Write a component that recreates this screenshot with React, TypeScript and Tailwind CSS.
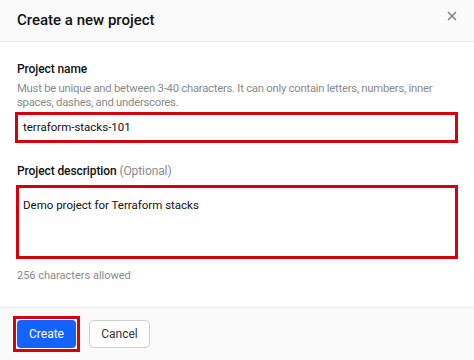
export default function App() {
  return (
    <div
      className="w-[474px] h-[360px] bg-white flex flex-col text-[#1f1f1f] overflow-hidden"
      style={{ fontFamily: "Roboto, 'Noto Sans', sans-serif" }}
    >
      {/* Header */}
      <div className="h-[42px] shrink-0 bg-[#fafafa] border-b border-[#ebebeb] flex items-center justify-between pl-[17px] pr-[17px]">
        <h2 className="text-[15px] font-medium text-[#111]">Create a new project</h2>
        <button className="text-[#777] -mt-[9px]" aria-label="Close">
          <svg width="10" height="10" viewBox="0 0 10 10" fill="none" stroke="currentColor" strokeWidth="1.3">
            <path d="M1 1l8 8M9 1l-8 8" />
          </svg>
        </button>
      </div>

      {/* Body */}
      <div className="flex-1 px-[17px] pt-[19px]">
        <label className="block text-[12px] font-medium leading-[16px] tracking-[-0.1px] text-[#111]">
          Project name
        </label>
        <p className="mt-[5px] text-[11.3px] leading-[14px] tracking-[-0.25px] text-[#8a8a8a]">
          Must be unique and between 3-40 characters. It can only contain letters, numbers, inner spaces, dashes, and underscores.
        </p>
        <div className="mt-[2px] -ml-[2px] -mr-[1px] h-[31px] border-[3px] border-[#d6000f] flex items-center px-[5px]">
          <span className="text-[11.5px] text-[#111]">terraform-stacks-101</span>
        </div>

        <div className="mt-[20px] text-[12px] leading-[16px] tracking-[-0.1px]">
          <span className="font-medium text-[#111]">Project description</span>{" "}
          <span className="text-[#8a8a8a]">(Optional)</span>
        </div>
        <div className="mt-[6px] -ml-[1px] -mr-[1px] h-[74px] border-[3px] border-[#d6000f] px-[4px] pt-[4px]">
          <span className="text-[11.5px] text-[#111]">Demo project for Terraform stacks</span>
        </div>
        <p className="mt-[9px] text-[11px] leading-[16px] text-[#8a8a8a]">256 characters allowed</p>
      </div>

      {/* Footer */}
      <div className="h-[53px] shrink-0 bg-[#fafafa] border-t border-[#ebebeb] flex items-center gap-[9px] pl-[13px]">
        <div className="border-[3px] border-[#d6000f] p-px bg-white">
          <button className="h-[28px] w-[59px] rounded-[4px] bg-[#1463ff] text-white text-[12px]">Create</button>
        </div>
        <button className="h-[28px] w-[61px] rounded-[5px] border border-[#cfcfcf] bg-white text-[#333] text-[12px]">
          Cancel
        </button>
      </div>
    </div>
  );
}
